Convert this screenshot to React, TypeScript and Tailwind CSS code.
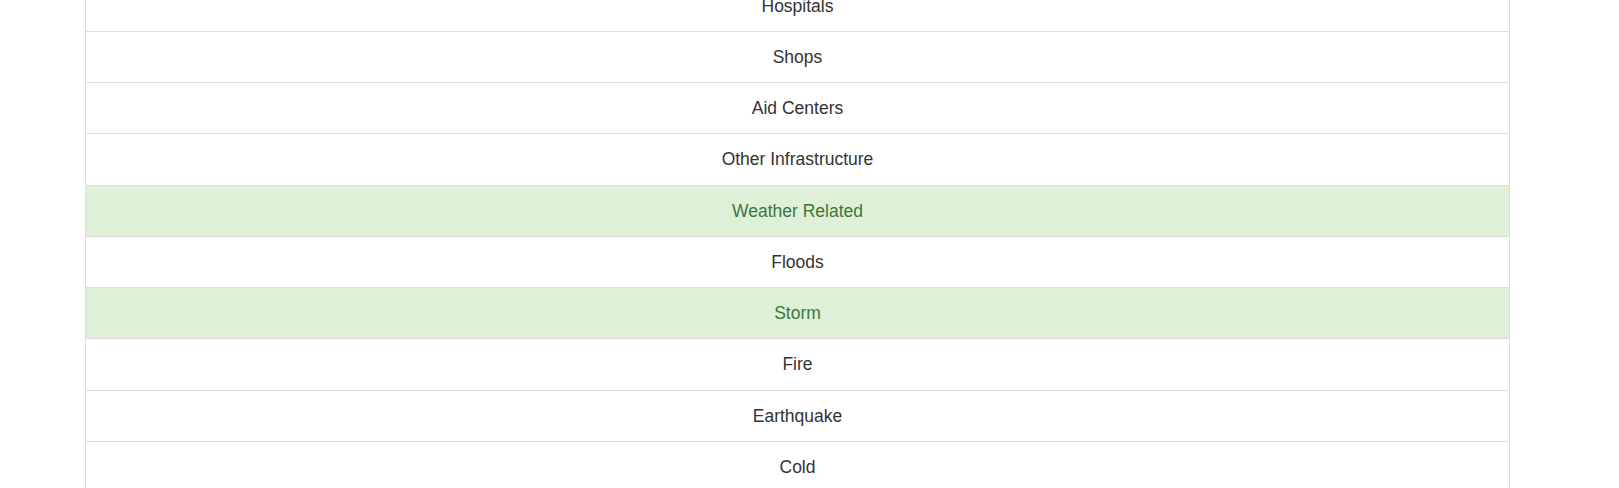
const items: { label: string; success?: boolean }[] = [
  { label: 'Hospitals' },
  { label: 'Shops' },
  { label: 'Aid Centers' },
  { label: 'Other Infrastructure' },
  { label: 'Weather Related', success: true },
  { label: 'Floods' },
  { label: 'Storm', success: true },
  { label: 'Fire' },
  { label: 'Earthquake' },
  { label: 'Cold' },
];

const App = () => {
  return (
    <div className="h-[488px] overflow-hidden bg-white" style={{ fontFamily: '"Liberation Sans", Arial, sans-serif' }}>
      <ul className="ml-[85px] mt-[-19.5px] w-[1425px] border-x border-[#dddddd]">
        {items.map((item) => (
          <li
            key={item.label}
            className={`box-border flex h-[51.25px] items-center justify-center border-b border-[#dddddd] pt-[1px] text-[17.5px] leading-[25px] ${
              item.success ? 'bg-[#dff0d8] text-[#3c763d]' : 'bg-white text-[#333333]'
            }`}
          >
            {item.label}
          </li>
        ))}
      </ul>
    </div>
  );
};

export default App;
